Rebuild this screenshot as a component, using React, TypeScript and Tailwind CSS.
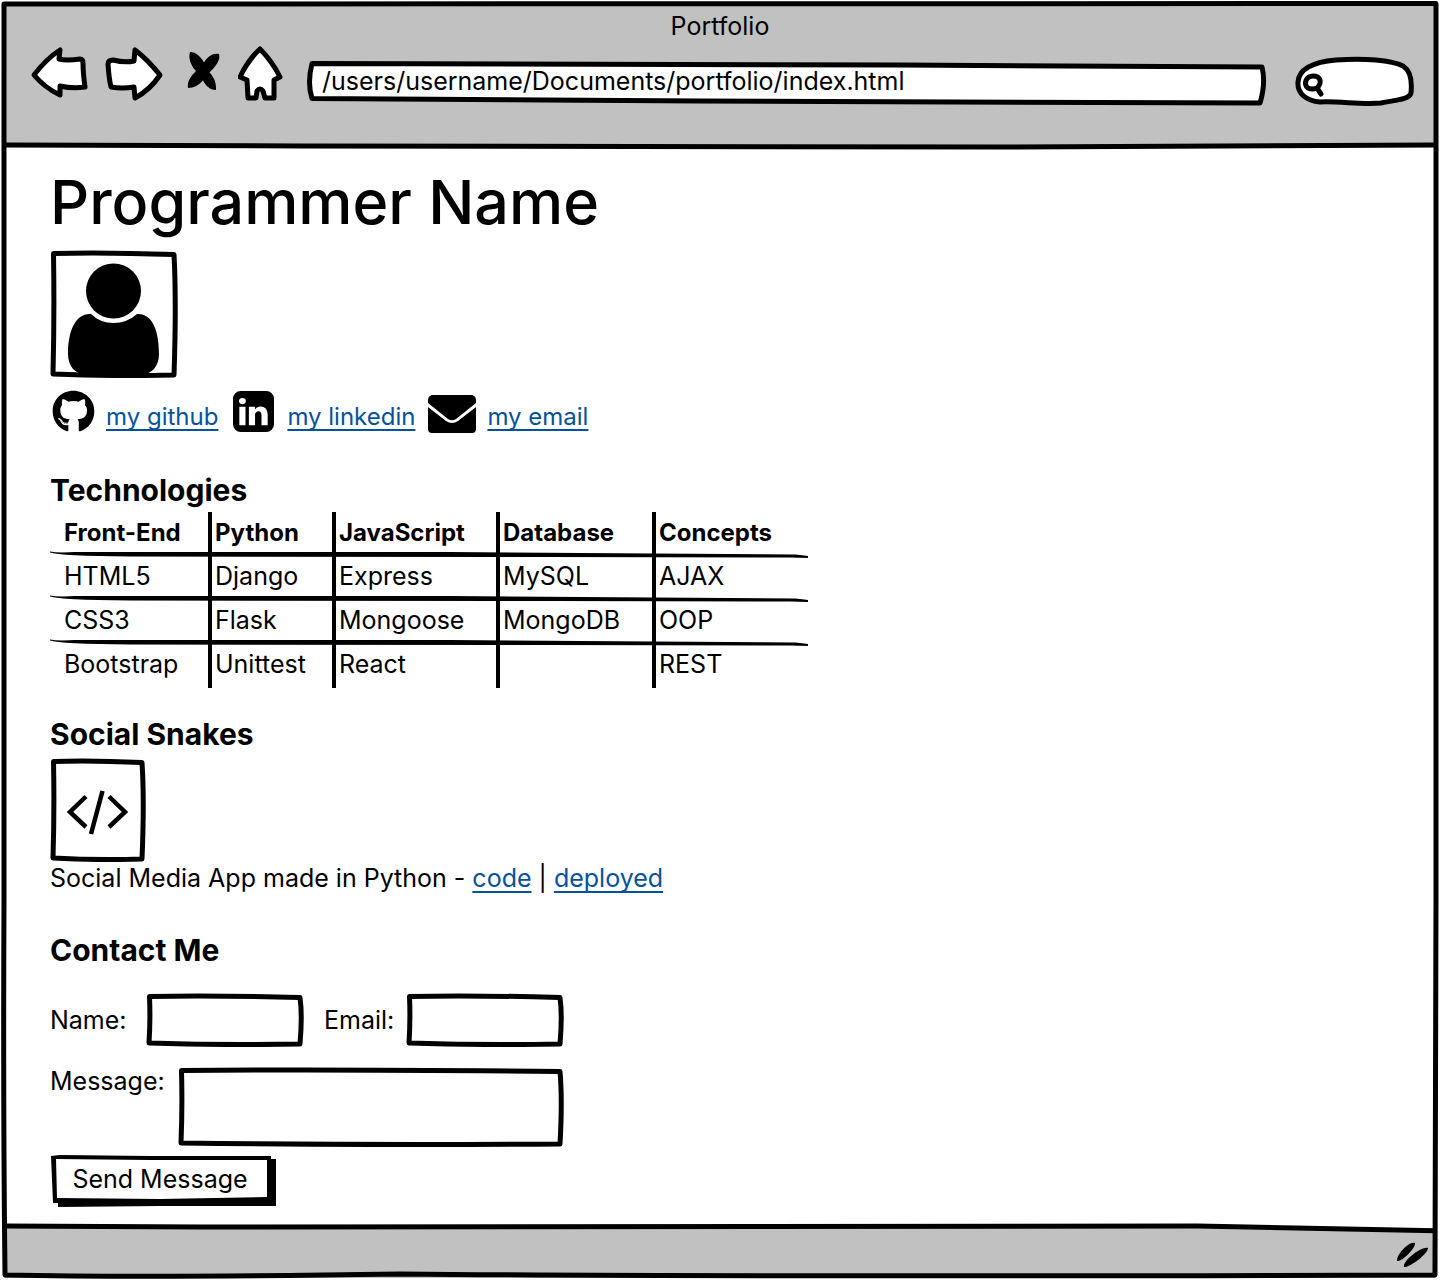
import React from 'react';
import { FaGithub } from 'react-icons/fa';

const technologies = {
  headers: ['Front-End', 'Python', 'JavaScript', 'Database', 'Concepts'],
  rows: [
    ['HTML5', 'Django', 'Express', 'MySQL', 'AJAX'],
    ['CSS3', 'Flask', 'Mongoose', 'MongoDB', 'OOP'],
    ['Bootstrap', 'Unittest', 'React', '', 'REST'],
  ],
};

const linkClass = 'text-[#06529a] underline decoration-2 underline-offset-4 [text-decoration-skip-ink:none]';
const headingClass = 'text-[30px] font-bold leading-9';

// Hand drawn rectangle that stretches over its parent
const SketchFrame: React.FC<{ w: number; h: number }> = ({ w, h }) => (
  <svg
    className="pointer-events-none absolute inset-0 h-full w-full"
    viewBox={`0 0 ${w} ${h}`}
    preserveAspectRatio="none"
    fill="none"
    stroke="#000"
    strokeWidth="5"
    strokeLinejoin="round"
    aria-hidden="true"
  >
    <path
      vectorEffect="non-scaling-stroke"
      d={`M3.5 3.5 Q${w * 0.4} 2 ${w - 4} 4.5 Q${w - 1.5} ${h * 0.4} ${w - 4} ${h - 3} Q${w * 0.5} ${h - 1.5} 3 ${h - 4} Q4.5 ${h * 0.5} 3.5 3.5Z`}
    />
  </svg>
);

const BrowserOutline = () => (
  <svg
    className="pointer-events-none absolute inset-0 h-full w-full"
    viewBox="0 0 1440 1280"
    preserveAspectRatio="none"
    fill="none"
    stroke="#000"
    strokeWidth="5"
    strokeLinejoin="round"
    aria-hidden="true"
  >
    <path d="M4 4 L1436 3.5 Q1434 500 1436 900 L1435 1275 Q700 1277 400 1274 Q150 1278 5 1275 Q3 1100 4 900 Q6 400 4 4Z" />
  </svg>
);

const Divider: React.FC<{ d: string }> = ({ d }) => (
  <svg
    className="block h-3 w-full"
    viewBox="0 0 1440 12"
    preserveAspectRatio="none"
    fill="#fff"
    stroke="#000"
    strokeWidth="5"
    aria-hidden="true"
  >
    <path d={d} />
  </svg>
);

const Toolbar = () => (
  <div className="flex items-start gap-[22px] pl-[26px] pr-5">
    <nav className="flex gap-[14px]" aria-label="Browser">
      <button type="button" aria-label="Back">
        <svg width="60" height="60" viewBox="30 46 60 60" fill="#fff" stroke="#000" strokeWidth="5" strokeLinejoin="round">
          <path d="M34 75 Q46 59 60 50 L59 59 Q66 61 80 59 Q83 59 83 63 Q83 73 85 87 Q73 89 60 86 L60 95 Q45 88 34 75Z" />
        </svg>
      </button>
      <button type="button" aria-label="Forward">
        <svg width="60" height="60" viewBox="104 46 60 60" fill="#fff" stroke="#000" strokeWidth="5" strokeLinejoin="round">
          <path d="M160 75 Q147 59 135 50 L134 61 Q125 63 113 60 Q108 60 108 64 Q109 79 111 87 Q122 89 134 87 L135 98 Q150 90 160 75Z" />
        </svg>
      </button>
      <button type="button" aria-label="Stop">
        <svg width="46" height="60" viewBox="178 46 46 60">
          <path d="M190 52 C196 52 201 57 204 62.500 C208 56 213 53 219 54 C221 60 215 67 209.500 72.500 C214 77 216.500 83 216 90 C210 90 206 86 203 80.500 C199 85 194 88 188 88 C187 81 191 76 196 71 C191 66 188 58 190 52Z" />
        </svg>
      </button>
      <button type="button" aria-label="Home">
        <svg width="46" height="60" viewBox="238 46 46 60" fill="#fff" stroke="#000" strokeWidth="5" strokeLinejoin="round">
          <path d="M260 49 Q248 60 240 77 L247 80 L248 98 L256 98 L257 91 Q260 87 263 91 L265 98 L274 98 L274 80 L280 77 Q272 61 260 49Z" />
        </svg>
      </button>
    </nav>
    <div className="relative flex h-[60px] min-w-0 flex-1">
      <svg
        className="absolute inset-0 h-full w-full"
        viewBox="306 46 966 60"
        preserveAspectRatio="none"
        fill="#fff"
        stroke="#000"
        strokeWidth="5"
        strokeLinejoin="round"
        aria-hidden="true"
      >
        <path d="M312 63.5 L900 65 L1262 67 Q1266 83 1260 103 L700 101 L312 98.5 Q307 83 312 63.5Z" />
      </svg>
      <input
        type="text"
        aria-label="Address"
        defaultValue="/users/username/Documents/portfolio/index.html"
        className="relative mx-4 mt-[15px] h-10 w-full bg-transparent outline-none"
      />
    </div>
    <div className="relative h-[60px] w-[122px]">
      <svg
        className="absolute inset-0 h-full w-full"
        viewBox="1294 46 122 60"
        fill="#fff"
        stroke="#000"
        strokeWidth="5"
        strokeLinejoin="round"
        strokeLinecap="round"
        aria-hidden="true"
      >
        <path d="M1320 102 C1306 101 1297 93 1298 82 C1299 69 1313 62 1336 60 C1364 58 1392 60 1403 66 C1411 71 1412 83 1411 93 C1409 100 1395 100 1381 103 C1362 105 1340 101 1320 102Z" />
        <path d="M1317 88 C1323 82 1320 76 1313 76 C1306 76 1303 84 1308 88 Q1312 90 1317 88 L1321 94" fill="none" />
      </svg>
      <input type="search" aria-label="Search" className="relative ml-8 mt-4 h-8 w-20 bg-transparent outline-none" />
    </div>
  </div>
);

const SocialLinks = () => (
  <div className="mt-3 flex items-center text-[24px]">
    <FaGithub size={43} className="ml-0.5" aria-hidden="true" />
    <a href="#github" className={`ml-[11px] mt-2.5 ${linkClass}`}>my github</a>
    <svg className="ml-[15px]" width="41" height="41" viewBox="128 128 1536 1536" aria-hidden="true">
      <path d="M365 1414h231v-694h-231v694zm246-908q-1-52-36-86t-93-34-94.500 34-36.500 86q0 51 35.500 85.500t92.500 34.500h1q59 0 95-34.500t36-85.500zm585 908h231v-398q0-154-73-233t-193-79q-136 0-209 117h2v-101h-231q3 66 0 694h231v-388q0-38 7-56 15-35 45-59.500t74-24.500q116 0 116 157v371zm468-998v960q0 119-84.500 203.500t-203.500 84.500h-960q-119 0-203.500-84.500t-84.500-203.500v-960q0-119 84.500-203.500t203.500-84.500h960q119 0 203.500 84.500t84.500 203.500z" />
    </svg>
    <a href="#linkedin" className={`ml-[13px] mt-2.5 ${linkClass}`}>my linkedin</a>
    <svg className="ml-[13px] mt-1" width="48" height="38" viewBox="0 0 48 38" aria-hidden="true">
      <path d="M5 0h38a5 5 0 0 1 5 5v3L28 24Q24 26.500 20 24L0 8V5a5 5 0 0 1 5-5Z" />
      <path d="M0 12L18 26Q24 30 30 26L48 12V34a4 4 0 0 1-4 4H4a4 4 0 0 1-4-4Z" />
    </svg>
    <a href="#email" className={`ml-[11px] mt-2.5 ${linkClass}`}>my email</a>
  </div>
);

const TechnologiesTable = () => (
  <div className="relative w-[758px]">
    <table className="w-full table-fixed border-collapse text-left">
      <colgroup>
        <col className="w-[160px]" />
        <col className="w-[124px]" />
        <col className="w-[164px]" />
        <col className="w-[156px]" />
        <col />
      </colgroup>
      <thead>
        <tr className="h-11">
          {technologies.headers.map((header) => (
            <th key={header} className="border-l-4 border-black p-0 pb-0.5 pl-[3px] text-[24px] font-bold first:border-l-0 first:pl-[14px]">{header}</th>
          ))}
        </tr>
      </thead>
      <tbody>
        {technologies.rows.map((row) => (
          <tr key={row[0]} className="h-11">
            {row.map((cell, i) => (
              <td key={i} className="border-l-4 border-black p-0 pb-1 pl-[3px] first:border-l-0 first:pl-[14px]">{cell}</td>
            ))}
          </tr>
        ))}
      </tbody>
    </table>
    <svg
      className="pointer-events-none absolute inset-0 h-full w-full"
      viewBox="0 0 758 176"
      preserveAspectRatio="none"
      aria-hidden="true"
    >
      {[0, 44, 88].map((y) => (
        <path key={y} transform={`translate(0 ${y})`} d="M0 39.500Q8 41 25 40L400 40L745 42.500Q753 43 758 44V46Q748 45.500 740 45.500L500 45L80 44.500Q10 44 0 40.500Z" />
      ))}
    </svg>
  </div>
);

const ContactForm = () => (
  <form className="w-[514px]" onSubmit={(e) => e.preventDefault()}>
    <div className="flex items-center justify-between">
      <label htmlFor="name">Name:</label>
      <div className="relative ml-auto h-[54px] w-[158px]">
        <SketchFrame w={158} h={54} />
        <input id="name" type="text" className="h-full w-full bg-transparent px-3 outline-none" />
      </div>
      <label htmlFor="email" className="ml-5 w-[82px]">Email:</label>
      <div className="relative h-[54px] w-[158px]">
        <SketchFrame w={158} h={54} />
        <input id="email" type="text" className="h-full w-full bg-transparent px-3 outline-none" />
      </div>
    </div>
    <div className="mt-5 flex items-start justify-between">
      <label htmlFor="message" className="leading-7">Message:</label>
      <div className="relative h-20 w-[386px]">
        <SketchFrame w={386} h={80} />
        <textarea id="message" className="block h-full w-full resize-none bg-transparent px-3 py-2 outline-none" />
      </div>
    </div>
    <button type="submit" className="relative mt-[7px] block h-[54px] w-[228px] pb-1 pr-2">
      <svg className="absolute inset-0" width="228" height="54" viewBox="50 1154 228 54" aria-hidden="true">
        <path d="M51 1156L60 1155L150 1156L271 1156V1159H276V1206L160 1206L58 1207V1203H53Z" />
        <path d="M56 1159L150 1160L267 1160V1197L160 1199L57 1198Z" fill="#fff" />
      </svg>
      <span className="relative">Send Message</span>
    </button>
  </form>
);

const App: React.FC = () => (
  <div className="relative flex min-h-screen flex-col bg-white px-1 py-0.5 font-['Inter',sans-serif] text-[25px] leading-8 text-black">
    <header className="bg-[#c1c1c1] pt-2">
      <div className="text-center">Portfolio</div>
      <div className="mt-1 pb-8"><Toolbar /></div>
      <Divider d="M-9 7 L300 8 Q700 10 1000 9 L1449 7 V20 H-9Z" />
    </header>

    <main className="flex-1 pl-[46px]">
      <h1 className="pt-1.5 pb-0.5 text-[61px] font-medium leading-[92px]">Programmer Name</h1>
      <div className="relative h-32 w-32">
        <SketchFrame w={128} h={128} />
        <svg width="128" height="128" viewBox="50 250 128 128" role="img" aria-label="Profile">
          <circle cx="113.500" cy="291" r="27.500" />
          <path d="M91 314Q100 323 113.500 323Q127 323 137 314C152 313 159 330 159 354C159 367 151 374 143 374H84C76 374 68 367 68 354C68 330 76 313 91 314Z" />
        </svg>
      </div>
      <SocialLinks />

      <section className="mt-[39px]">
        <h2 className={`mb-1 ${headingClass}`}>Technologies</h2>
        <TechnologiesTable />
      </section>

      <section className="mt-7">
        <h2 className={`mb-1.5 ${headingClass}`}>Social Snakes</h2>
        <div className="relative h-[104px] w-24">
          <SketchFrame w={96} h={104} />
          <svg width="96" height="104" viewBox="50 758 96 104" fill="none" stroke="#000" strokeWidth="4.500" role="img" aria-label="Code">
            <path d="M86 796.500L70 812L86 827M109 796.500L125 812L109 827M102.500 791L91 834" />
          </svg>
        </div>
        <p>
          Social Media App made in Python - <a href="#code" className={linkClass}>code</a> | <a href="#deployed" className={linkClass}>deployed</a>
        </p>
      </section>

      <section className="mt-[38px]">
        <h2 className={`mb-[25px] ${headingClass}`}>Contact Me</h2>
        <ContactForm />
      </section>
    </main>

    <footer className="bg-[#c1c1c1]">
      <Divider d="M-9 4 L200 5 L1200 4 L1449 9 V-9 H-9Z" />
      <div className="flex h-11 items-center justify-end pr-1">
        <svg width="40" height="34" viewBox="1392 1239 40 34" aria-hidden="true">
          <path d="M1397 1261C1397 1254 1409 1241 1415 1243C1416 1248 1402 1262 1397 1261ZM1404 1267C1403 1260 1422 1246 1428 1248C1428 1254 1409 1268 1404 1267Z" />
        </svg>
      </div>
    </footer>
    <BrowserOutline />
  </div>
);

export default App;
